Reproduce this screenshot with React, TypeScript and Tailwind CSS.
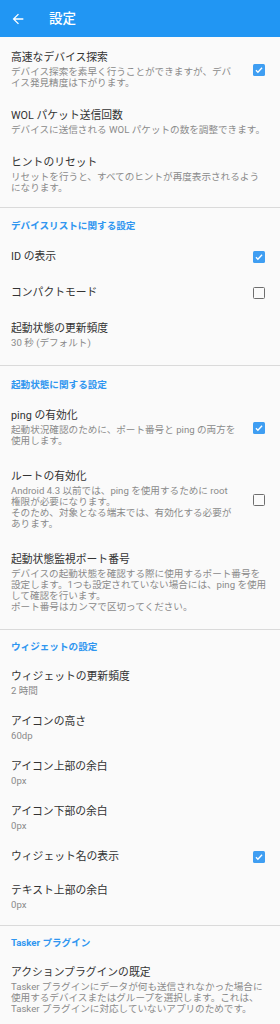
import React from "react";

interface Item {
    title: string;
    sub?: string[];
    checked?: boolean;
    pad?: string;
}

interface Section {
    header?: string;
    pad: string;
    items: Item[];
}

const sections: Section[] = [
    {
        pad: "pt-[3px] pb-[4px]",
        items: [
            {
                title: "高速なデバイス探索",
                sub: ["デバイス探索を素早く行うことができますが、デバ", "イス発見精度は下がります。"],
                checked: true,
            },
            { title: "WOL パケット送信回数", sub: ["デバイスに送信される WOL パケットの数を調整できます。"] },
            {
                title: "ヒントのリセット",
                sub: ["リセットを行うと、すべてのヒントが再度表示されるよう", "になります。"],
            },
        ],
    },
    {
        header: "デバイスリストに関する設定",
        pad: "pt-[12px] pb-[7px]",
        items: [
            { title: "ID の表示", checked: true },
            { title: "コンパクトモード", checked: false },
            { title: "起動状態の更新頻度", sub: ["30 秒 (デフォルト)"] },
        ],
    },
    {
        header: "起動状態に関する設定",
        pad: "pt-[13px] pb-[7px]",
        items: [
            {
                title: "ping の有効化",
                sub: ["起動状況確認のために、ポート番号と ping の両方を", "使用します。"],
                checked: true,
                pad: "pt-[11px] pb-[13px]",
            },
            {
                title: "ルートの有効化",
                sub: [
                    "Android 4.3 以前では、ping を使用するために root",
                    "権限が必要になります。",
                    "そのため、対象となる端末では、有効化する必要が",
                    "あります。",
                ],
                checked: false,
                pad: "pt-[11px] pb-[13px]",
            },
            {
                title: "起動状態監視ポート番号",
                sub: [
                    "デバイスの起動状態を確認する際に使用するポート番号を",
                    "設定します。1つも設定されていない場合には、ping を使用",
                    "して確認を行います。",
                    "ポート番号はカンマで区切ってください。",
                ],
            },
        ],
    },
    {
        header: "ウィジェットの設定",
        pad: "pt-[11px] pb-[6px]",
        items: [
            { title: "ウィジェットの更新頻度", sub: ["2 時間"], pad: "pt-[10px] pb-[9px]" },
            { title: "アイコンの高さ", sub: ["60dp"], pad: "pt-[10px] pb-[9px]" },
            { title: "アイコン上部の余白", sub: ["0px"], pad: "pt-[10px] pb-[9px]" },
            { title: "アイコン下部の余白", sub: ["0px"], pad: "pt-[10px] pb-[9px]" },
            { title: "ウィジェット名の表示", checked: true, pad: "pt-[10px] pb-[10px]" },
            { title: "テキスト上部の余白", sub: ["0px"], pad: "pt-[10px] pb-[9px]" },
        ],
    },
    {
        header: "Tasker プラグイン",
        pad: "pt-[11px] pb-[10px]",
        items: [
            {
                title: "アクションプラグインの既定",
                sub: [
                    "Tasker プラグインにデータが何も送信されなかった場合に",
                    "使用するデバイスまたはグループを選択します。これは、",
                    "Tasker プラグインに対応していないアプリのためです。",
                ],
                pad: "pt-[10px] pb-[10px]",
            },
        ],
    },
];

function Checkbox({ checked }: { checked: boolean }) {
    if (checked) {
        return (
            <div className="w-[12px] h-[12px] rounded-[1.5px] bg-[#3f9ef2] flex items-center justify-center">
                <svg width="10" height="10" viewBox="0 0 18 18" fill="none">
                    <polyline points="3.5 9.5 7 13 14.5 5" stroke="#ffffff" strokeWidth="2.4" />
                </svg>
            </div>
        );
    }
    return <div className="w-[12px] h-[12px] rounded-[1.5px] border-[1.5px] border-[#6e6e6e]" />;
}

function Row({ item }: { item: Item }) {
    const hasCheck = item.checked !== undefined;
    const pad = item.pad ?? (item.sub ? "pt-[11px] pb-[10px]" : "pt-[11px] pb-[11px]");

    return (
        <div className={`flex items-center pl-[11px] pr-[15px] ${pad}`}>
            <div className="flex-1 min-w-0">
                <p className="text-[10.8px] leading-[14px] text-[#333333] whitespace-nowrap">{item.title}</p>
                {item.sub && (
                    <div className="mt-[1px]">
                        {item.sub.map((line, i) => (
                            <p key={i} className="text-[9.6px] leading-[11px] text-[#8a8a8a] whitespace-nowrap">
                                {line}
                            </p>
                        ))}
                    </div>
                )}
            </div>
            {hasCheck && <Checkbox checked={!!item.checked} />}
        </div>
    );
}

export default function App() {
    return (
        <div
            className="w-[280px] h-[1024px] overflow-hidden bg-[#fafafa]"
            style={{ fontFamily: "Roboto, 'Noto Sans CJK JP', sans-serif" }}
        >
            {/* APP BAR */}
            <div className="h-[37px] bg-[#2196f3] flex items-center pl-[10px]">
                <svg width="16" height="16" viewBox="0 0 24 24" fill="#ffffff">
                    <path d="M20 11H7.83l5.59-5.59L12 4l-8 8 8 8 1.41-1.41L7.83 13H20v-2z" />
                </svg>
                <span className="ml-[23px] text-[13.5px] font-medium text-white">設定</span>
            </div>

            {sections.map((section, si) => (
                <div key={si}>
                    {si > 0 && <div className="h-px bg-[#dadada]" />}
                    <div className={section.pad}>
                        {section.header && (
                            <p className="px-[11px] mb-[7px] text-[9.6px] leading-[12px] font-bold text-[#2f96f0]">
                                {section.header}
                            </p>
                        )}
                        {section.items.map((item) => (
                            <Row key={item.title} item={item} />
                        ))}
                    </div>
                </div>
            ))}
        </div>
    );
}
